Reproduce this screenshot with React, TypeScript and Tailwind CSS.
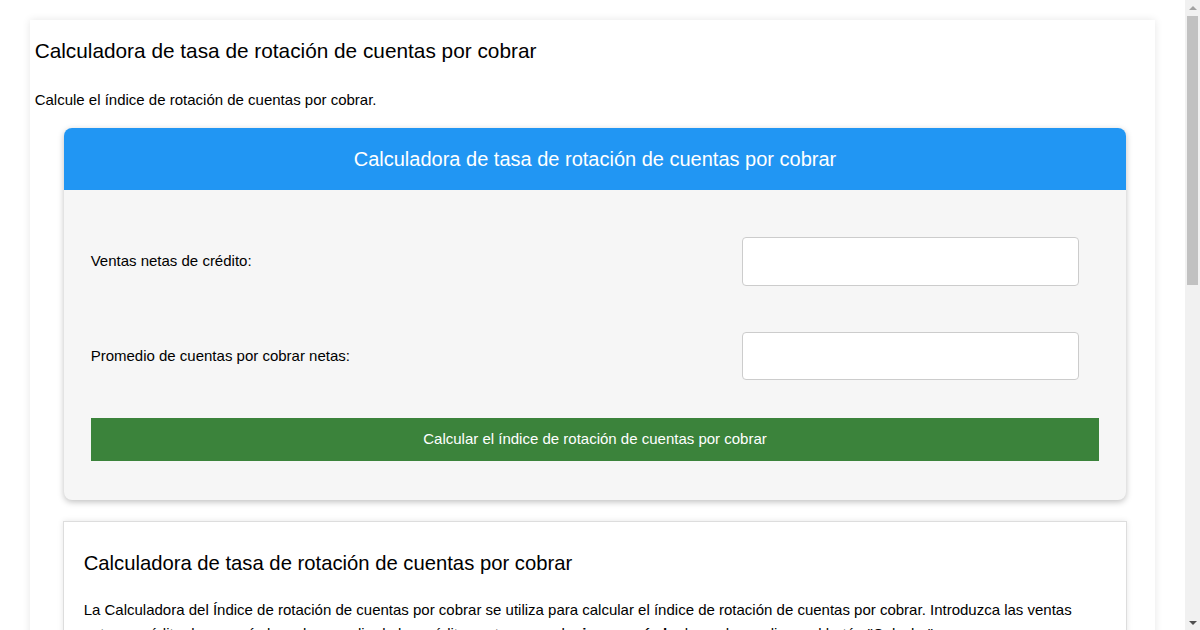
import React from "react";

export default function App() {
  return (
    <div className="flex h-[630px] w-full overflow-hidden bg-white font-['Liberation_Sans',Arial,sans-serif] text-black">
      <div className="min-w-0 flex-1">
        <div className="mx-auto mt-[20px] w-[95%] bg-white pl-[5px] pb-[40px] shadow-[0_0_8px_rgba(0,0,0,0.1)]">
          <h1 className="pt-[19px] text-[20.8px] leading-[24px] font-normal">
            Calculadora de tasa de rotación de cuentas por cobrar
          </h1>
          <p className="mt-[28px] text-[15px] leading-[17px]">
            Calcule el índice de rotación de cuentas por cobrar.
          </p>

          <div className="mx-[29px] mt-[20px] overflow-hidden rounded-[8px] bg-[#f6f6f6] shadow-[0_2px_6px_rgba(0,0,0,0.25)]">
            <div className="flex h-[62px] items-center justify-center bg-[#2196f3] text-[20px] text-white">
              Calculadora de tasa de rotación de cuentas por cobrar
            </div>
            <div className="px-[27px] pt-[47px] pb-[39px]">
              <div className="flex h-[49px] items-center justify-between">
                <label className="text-[15px]">Ventas netas de crédito:</label>
                <input
                  type="text"
                  className="mr-[20px] h-[49px] w-[337px] rounded-[4px] border border-[#cccccc] bg-white"
                />
              </div>
              <div className="mt-[46px] flex h-[48px] items-center justify-between">
                <label className="text-[15px]">Promedio de cuentas por cobrar netas:</label>
                <input
                  type="text"
                  className="mr-[20px] h-[48px] w-[337px] rounded-[4px] border border-[#cccccc] bg-white"
                />
              </div>
              <button className="mt-[38px] flex h-[43px] w-full items-center justify-center bg-[#3b833b] text-[15px] text-white">
                Calcular el índice de rotación de cuentas por cobrar
              </button>
            </div>
          </div>

          <div className="mx-[28px] mt-[21px] border border-[#dddddd] bg-white px-[20px] pt-[28px] pb-[20px] shadow-[0_0_6px_rgba(0,0,0,0.1)]">
            <h2 className="text-[20.25px] leading-[26px] font-normal">
              Calculadora de tasa de rotación de cuentas por cobrar
            </h2>
            <p className="mt-[22px] text-[15px] leading-[24px]">
              La Calculadora del Índice de rotación de cuentas por cobrar se utiliza para calcular el índice de
              rotación de cuentas por cobrar. Introduzca las ventas netas a crédito de un período y el promedio de
              los créditos netos para el <b>mismo período</b>, luego haga clic en el botón "Calcular".
            </p>
          </div>
        </div>
      </div>

      <div className="flex w-[15px] shrink-0 flex-col items-center bg-[#f1f1f1]">
        <div className="flex h-[15px] w-full items-center justify-center">
          <div className="h-0 w-0 border-x-[4px] border-b-[4px] border-x-transparent border-b-[#a3a3a3]" />
        </div>
        <div className="mt-[1px] h-[269px] w-[11px] bg-[#c1c1c1]" />
        <div className="flex-1" />
        <div className="flex h-[15px] w-full items-center justify-center">
          <div className="h-0 w-0 border-x-[4px] border-t-[4px] border-x-transparent border-t-[#505050]" />
        </div>
      </div>
    </div>
  );
}
